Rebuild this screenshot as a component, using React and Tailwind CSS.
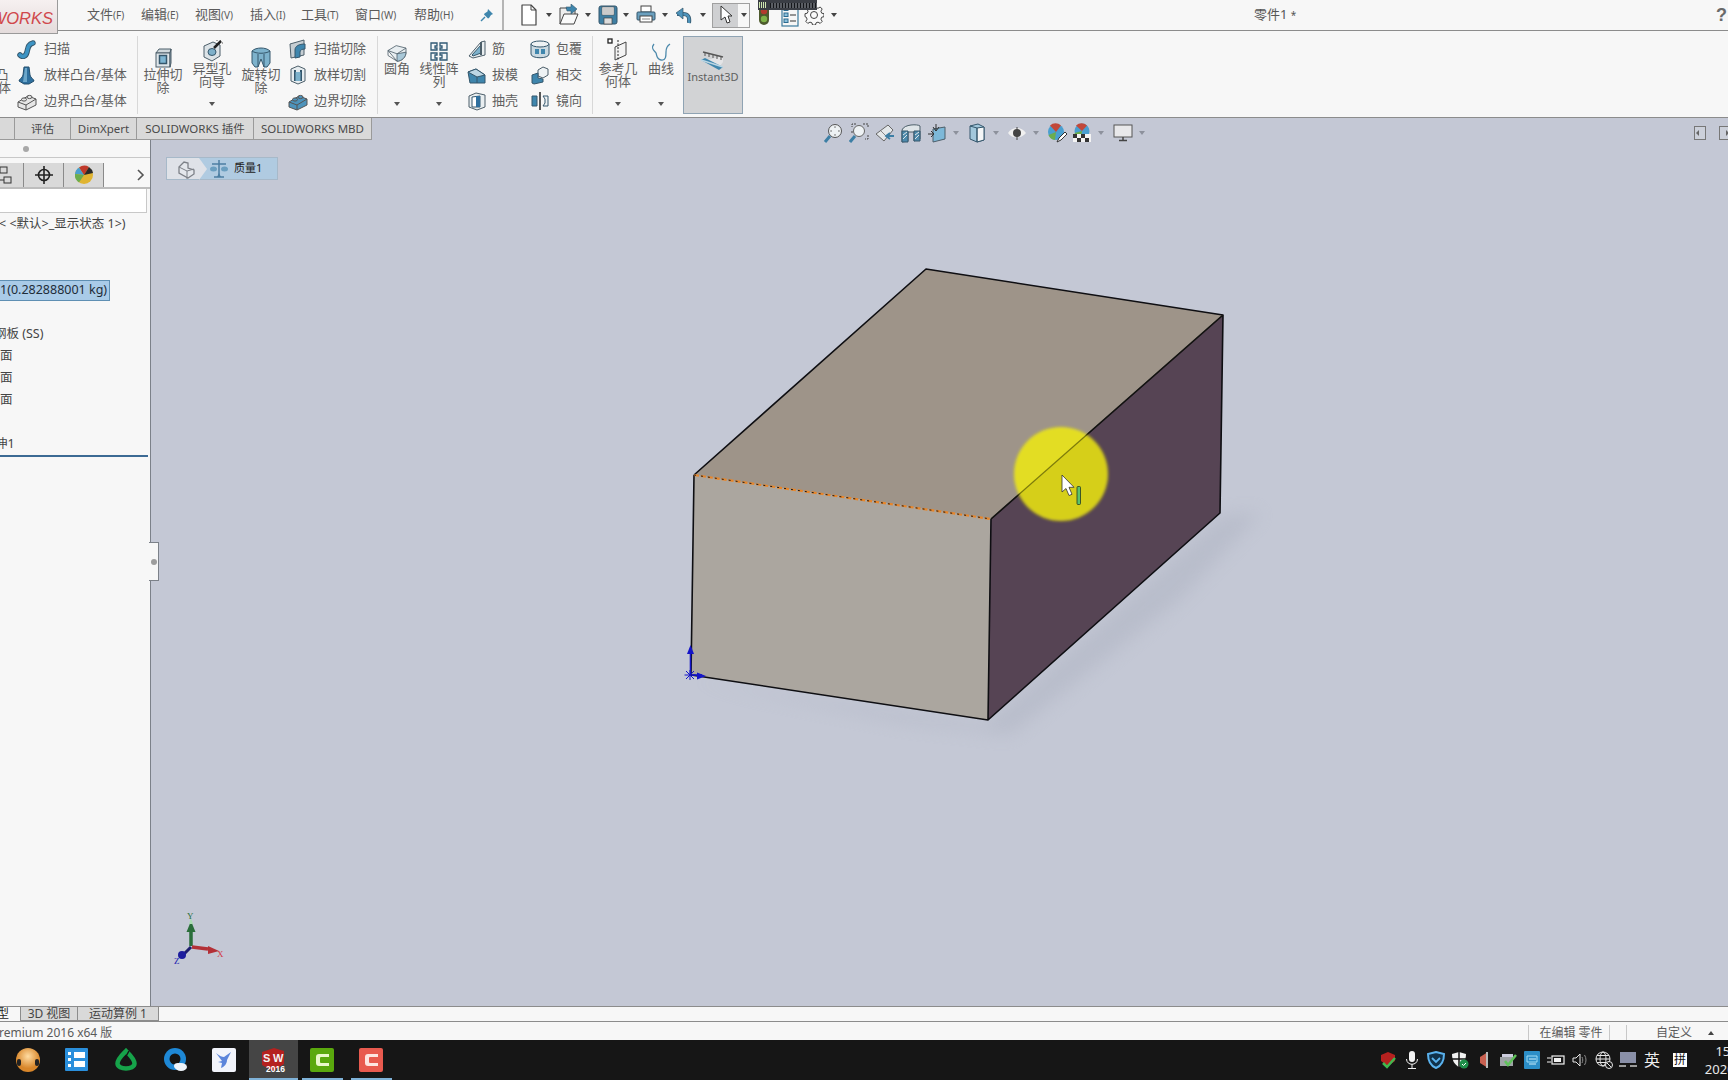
import React from "react";

const S = ({ w = 22, h = 22, vb, children, className = "" }) => (
  <svg width={w} height={h} viewBox={vb || `0 0 ${w} ${h}`} className={`block shrink-0 ${className}`} fill="none">
    {children}
  </svg>
);
const D = "#35576c";

const Arrow = ({ c = "#444" }) => (
  <svg width="8" height="4" viewBox="0 0 8 4" className="block shrink-0"><path d="M1 0h6L4 4z" fill={c} /></svg>
);

/* ---------- ribbon icons ---------- */
const I = {
  sweep: () => (<S w={20} h={20}><path d="M3 16c3 3 6 1 7-3s1-8 6-9" stroke={D} strokeWidth="5.5" strokeLinecap="round" /><path d="M3 16c3 3 6 1 7-3s1-8 6-9" stroke="#3d94c4" strokeWidth="3.6" strokeLinecap="round" /></S>),
  loft: () => (<S w={20} h={20}><path d="M7 2h5l1 8c.5 3 4 4 4 6l-5 3H7l-5-3c0-2 3.500-3 4-6z" fill="#2e6f9e" stroke="#234e6c" /><path d="M8 3h2l0 14H6z" fill="#6ba6c9" /></S>),
  lego: ({ f = "#e8e8e8" }) => (<S w={20} h={20}><path d="M1 11l10-6 8 3v6L9 19l-8-3z" fill={f} stroke="#555" /><path d="M1 11l8 3 10-6M9 14v5" stroke="#555" /><ellipse cx="7" cy="8.500" rx="2.500" ry="1.600" fill={f} stroke="#555" /><ellipse cx="12.500" cy="6" rx="2.500" ry="1.600" fill={f} stroke="#555" /></S>),
  extrudeCut: () => (<S><path d="M4 7l3-4h12l-1 4z" fill="#cfd8dc" stroke="#4d5f6a" /><rect x="4" y="7" width="14" height="14" fill="#dfe6ea" stroke="#4d5f6a" /><rect x="7.500" y="9.500" width="7" height="8" fill="#7eb5d2" stroke={D} strokeWidth="1.500" /><path d="M18 7l1-4v14l-1 4z" fill="#9eb2bf" stroke="#4d5f6a" /></S>),
  hole: () => (<S><path d="M3 6l9-4 7 3v11l-8 5-8-4z" fill="#dce3e7" stroke="#4d5f6a" /><ellipse cx="11" cy="12" rx="4" ry="3.500" fill="#7eb0ca" stroke={D} /><path d="M13 8l7-7" stroke="#222" strokeWidth="2.500" /><path d="M19 0l1 1M21 3l1 0M16 0v1" stroke="#555" /></S>),
  revolveCut: () => (<S><path d="M2 5c4-4 14-4 18 0v12l-3 4h-3l-3-8-3 8H5l-3-4z" fill="#7db2cc" stroke={D} /><path d="M2 5c4 3 14 3 18 0M8 8v13M14 8v13" stroke={D} /></S>),
  sweepCut: () => (<S w={20} h={20}><path d="M2 5l14-4v15l-13 3z" fill="#c6ced3" stroke="#4d5f6a" /><path d="M7 19V11c0-4 4-6 10-6v5c-3 0-5 1-5 3v5z" fill="#3f86ad" stroke={D} /></S>),
  loftCut: () => (<S w={20} h={20}><path d="M3 4l7-3 7 3v12l-7 3-7-3z" fill="#e6ecef" stroke="#4d5f6a" /><path d="M7 5v11M13 5v11" stroke={D} strokeWidth="2" /><path d="M7 16h3V7h-3zM13 16h-3V7h3z" fill="#7db2cc" /><path d="M7 16V6M13 16V6" stroke={D} /></S>),
  fillet: () => (<S w={20} h={18} vb="0 0 24 22"><path d="M1 8l10-6 12 3v5c0 6-5 11-11 11z" fill="#e8eef1" stroke="#4d5f6a" /><path d="M1 8l11 4 11-7" stroke="#4d5f6a" /><path d="M12 12v9c6 0 11-5 11-11z" fill="#a9c8d8" stroke="#4d5f6a" /><path d="M1 8v6l11 7" stroke="#4d5f6a" /></S>),
  pattern: () => (<S><g stroke="#315a75" strokeWidth="1.300" fill="#f4f7f8"><path d="M3 3h6v3H7v2h2v2H3z" /><path d="M12 3h7v7h-7V8h2V6h-2z" /><path d="M3 13h6v2H7v3h2v2H3z" /><path d="M12 13h7v7h-7v-2h2v-3h-2z" /></g></S>),
  rib: () => (<S w={20} h={20}><path d="M2 17l12-14 4-1v14L6 19z" fill="#e9eef0" stroke="#4d5f6a" /><path d="M5 16L14 6v8l-8 3z" fill="#7db2cc" stroke={D} /><path d="M14 3v13" stroke="#4d5f6a" strokeWidth="2" /></S>),
  draft: () => (<S w={20} h={20} ><path d="M1 7l8-3 9 6v8H3z" fill="#3f86ad" stroke={D} /><path d="M1 7l8-3 9 6-8 2z" fill="#bcd6e4" stroke={D} /><path d="M10 12v6" stroke={D} /></S>),
  shell: () => (<S w={20} h={20}><path d="M2 5l7-3 9 2v12l-8 3-8-3z" fill="#e9eef0" stroke="#4d5f6a" /><path d="M5 6l8-1v11l-8 0z" fill="#fff" stroke={D} /><path d="M9 5l4 0v11H9z" fill="#2f6f9e" /></S>),
  wrap: () => (<S w={20} h={20}><path d="M1 5v10c0 5 18 5 18 0V5" fill="#cad9e1" stroke={D} /><ellipse cx="10" cy="5" rx="9" ry="3" fill="#eef2f4" stroke={D} /><rect x="5" y="10" width="4" height="5" fill="#3f86ad" /><rect x="11" y="10" width="4" height="5" fill="#3f86ad" /></S>),
  intersect: () => (<S w={20} h={20}><path d="M8 5l5-3 5 2v6l-5 3-5-2z" fill="#eef2f4" stroke="#4d5f6a" /><path d="M2 10l6-2v5l5 1v3l-9 2-2-1z" fill="#3f86ad" stroke={D} /></S>),
  mirror: () => (<S w={20} h={20}><path d="M2 5h5v10H2zM4 8" fill="#3f86ad" stroke={D} /><path d="M13 5h5v10h-5l2-3v-4z" fill="#eef2f4" stroke={D} /><path d="M10 1v18" stroke="#222" strokeWidth="1.500" /></S>),
  refGeom: () => (<S w={22} h={24}><rect x="1" y="1" width="4" height="4" fill="#fff" stroke="#222" strokeWidth="1.300" /><path d="M8 9l11-5v13L8 22z" fill="#f3f3f3" stroke="#444" /><path d="M11 2v21" stroke="#222" strokeDasharray="2 1.500" /></S>),
  curve: () => (<S w={22} h={20}><path d="M4 2C0 7 5 9 6 11s0 6 5 7 5-4 5-8 1-6 4-8" stroke="#4d8aac" strokeWidth="1.300" /></S>),
  instant: () => (<S w={26} h={22}><path d="M3 12l20-5 0 6-5 7z" fill="#fff" opacity=".4" /><path d="M3 3l20 5" stroke="#555" strokeWidth="1.300" /><path d="M5 4v3M9 5v3M13 6v3M17 7v3M21 8v3" stroke="#555" /><path d="M1 11l4-2 18 9-4 3z" fill="#3f86ad" /><path d="M1 11l22 7" stroke="#bcd6e4" strokeWidth="1.500" /></S>),
  /* top bar */
  doc: () => (<S w={18} h={22}><path d="M2 1h9l5 5v15H2z" fill="#fff" stroke="#444" strokeWidth="1.200" strokeLinejoin="round" /><path d="M11 1v5h5" stroke="#444" /></S>),
  open: () => (<S w={22} h={22}><path d="M2 20V4h6l2 2h7v4" fill="#eee" stroke="#444" /><path d="M2 20l4-10h14l-4 10z" fill="#fafafa" stroke="#444" /><path d="M8 3h5V0l6 5-6 5V7H9z" fill="#3f86ad" stroke={D} strokeWidth=".6" /></S>),
  save: () => (<S w={20} h={20}><rect x="1" y="1" width="18" height="18" rx="2" fill="#3f7fa3" stroke={D} /><rect x="4" y="2" width="12" height="8" fill="#f0f0f0" stroke="#555" strokeWidth=".6" /><path d="M5 4h10M5 6h10M5 8h10" stroke="#888" strokeWidth=".7" /><rect x="6" y="13" width="8" height="6" fill="#dcdcdc" stroke="#444" strokeWidth=".7" /></S>),
  print: () => (<S w={20} h={20}><rect x="5" y="1" width="10" height="6" fill="#fff" stroke="#444" /><rect x="1" y="7" width="18" height="8" rx="1" fill="#6ba0bf" stroke={D} /><rect x="4" y="11" width="12" height="6" fill="#fff" stroke="#444" /><path d="M6 14h8" stroke="#888" /></S>),
  undo: () => (<S w={20} h={20}><path d="M3 9l6 0c5 0 7 3 6 9" stroke={D} strokeWidth="4" /><path d="M3 9l6 0c5 0 7 3 6 9" stroke="#4d93bb" strokeWidth="2.400" /><path d="M9 3L2 8l7 6z" fill="#4d93bb" stroke={D} strokeWidth=".7" /></S>),
  cursor: () => (<S w={14} h={20}><path d="M2 1v14l4-3 2 6 3-1-2-6h4z" fill="#fff" stroke="#333" strokeWidth="1" strokeLinejoin="round" /></S>),
  traffic: () => (<S w={12} h={22}><rect x="1" y="1" width="10" height="20" rx="5" fill="#4d5a2d" /><circle cx="6" cy="7" r="3.200" fill="#b33a2d" /><circle cx="6" cy="15" r="3.200" fill="#7eb247" /></S>),
  list: () => (<S w={18} h={24}><rect x="1" y="1" width="16" height="22" fill="#f6f6f6" stroke="#3b7a9d" strokeWidth="1.200" /><rect x="3" y="4" width="4" height="3.500" fill="none" stroke="#2a6a90" /><rect x="3" y="10" width="4" height="3.500" fill="#8cc0dc" stroke="#2a6a90" /><rect x="3" y="16" width="4" height="3.500" fill="#8cc0dc" stroke="#2a6a90" /><path d="M9 12h6M9 18h6" stroke="#333" /></S>),
  gear: () => (<S w={20} h={20}><path d="M8.500 1h3l.5 2.500 2 .8L16.200 3l2 2-1.300 2.200.8 2 2.300.5v3l-2.300.5-.8 2 1.300 2.200-2 2-2.200-1.300-2 .8-.5 2.100h-3l-.5-2.100-2-.8-2.200 1.300-2-2 1.300-2.200-.8-2L1 12.700v-3l2.300-.5.8-2L2.800 5l2-2 2.200 1.300 1-.8z" transform="translate(0 -1)" stroke="#444" fill="#fafafa" /><circle cx="10" cy="10" r="3.500" stroke="#444" /></S>),
  pin: () => (<S w={14} h={14}><path d="M8 1l5 5-2 1-2 3-1 .500L4 6.500l.500-1 3-2z" fill="#3f86ad" /><path d="M5 9l-4 4" stroke="#3f86ad" strokeWidth="1.500" /></S>),
  /* view toolbar */
  zoomFit: () => (<S w={20} h={20}><circle cx="12" cy="8" r="6.500" fill="#eef2f4" stroke="#555" /><path d="M2 19l5-6" stroke="#3d7fa5" strokeWidth="3" /><path d="M12 3l1 1.500h-2zM12 13l1-1.500h-2zM7 8l1.500-1v2zM17 8l-1.500-1v2z" fill="#555" /></S>),
  zoomArea: () => (<S w={20} h={20}><path d="M7 1H3v3M14 1h5v4M19 12v4h-3M3 8v2" stroke="#444" strokeDasharray="2 1" /><circle cx="10" cy="8" r="5.500" fill="#eef2f4" stroke="#666" /><path d="M1 19l5-6" stroke="#3d7fa5" strokeWidth="3" /></S>),
  prev: () => (<S w={20} h={20}><path d="M1 11l12-9 5 5-9 11z" fill="#e4e8ea" stroke="#666" /><path d="M6 8l5 5" stroke="#888" /><path d="M19 13h-7m3-3l-4 3 4 3" stroke="#3d7fa5" strokeWidth="1.800" /></S>),
  section: () => (<S w={20} h={20}><path d="M1 7c2-6 16-6 18-4v13l-6 2V9H7v9l-6 1z" fill="#dfe5e8" stroke="#4d5f6a" /><path d="M1 8h6v11H1zM13 8h6v10h-6z" fill="#4d8aac" stroke={D} /><path d="M2 12l4-3M2 16l4-4M14 12l4-3M14 16l4-4" stroke="#dfe5e8" /></S>),
  orient: () => (<S w={20} h={20}><path d="M6 6l12-2v12L6 19z" fill="#7db8d8" stroke="#4d5f6a" /><path d="M9 1v7M6 4l3 4 3-4" stroke="#333" /><path d="M1 11h6M4 8l3 3-3 3" stroke="#333" /></S>),
  cube: () => (<S w={18} h={20}><path d="M2 3l8-2 6 3v13l-7 2-7-3z" fill="#a2c8dc" stroke={D} /><path d="M9 5l7-1v13l-7 2z" fill="#f4f6f7" stroke={D} /><path d="M2 3l7 2v14" stroke={D} /></S>),
  eye: () => (<S w={18} h={14}><path d="M0 7c4-6 13-7 18 0-5 6-14 6-18 0z" fill="#f0f0f0" /><circle cx="9" cy="7" r="4" fill="#444" /><path d="M9 1v13" stroke="#444" /></S>),
  ballPen: () => (<S w={20} h={20}><circle cx="9" cy="9" r="8" fill="#4a9fd0" /><path d="M9 9L3 2.500A8 8 0 0 1 14 2.500z" fill="#c2483a" /><path d="M9 9L1.500 12A8 8 0 0 0 8 17z" fill="#6bad4e" /><path d="M10 19l2-4 6-6 2 2-6 6z" fill="#fff" stroke="#333" /></S>),
  ballScene: () => (<S w={20} h={20}><circle cx="10" cy="8" r="7.500" fill="#4a9fd0" /><path d="M10 8L4 2.500A8 8 0 0 1 15 2.500z" fill="#c2483a" /><path d="M10 8L2.500 10A8 8 0 0 0 9 15z" fill="#6bad4e" /><rect x="1" y="11" width="18" height="8" fill="#f4f4f4" /><path d="M1 11h4v4H1zM9 11h4v4H9zM5 15h4v4H5zM13 15h4v4h-4z" fill="#333" /></S>),
  monitor: () => (<S w={20} h={18}><rect x="1" y="1" width="18" height="12" fill="#e8e8ea" stroke="#555" /><path d="M10 13v3M6 16.500h8" stroke="#444" strokeWidth="1.500" /></S>),
  panelL: () => (<S w={12} h={14}><rect x=".5" y=".5" width="11" height="13" stroke="#777" fill="#ccd0da" /><path d="M5 4v6L2 7z" fill="#666" /></S>),
  panelR: () => (<S w={12} h={14}><rect x=".5" y=".5" width="11" height="13" stroke="#777" fill="#ccd0da" /><path d="M7 4v6l3-3z" fill="#666" /></S>),
  /* misc */
  tree: () => (<S w={16} h={18}><rect x="4" y="1" width="7" height="6" fill="none" stroke="#333" /><rect x="8" y="11" width="7" height="6" fill="none" stroke="#333" /><path d="M1 4h3M1 4v10h7" stroke="#333" /></S>),
  target: () => (<S w={18} h={18}><circle cx="9" cy="9" r="5.500" stroke="#222" strokeWidth="1.600" /><path d="M9 0v18M0 9h18" stroke="#222" strokeWidth="1.600" /></S>),
  ball: () => (<S w={20} h={20}><circle cx="10" cy="10" r="9" fill="#e0b431" /><path d="M10 10L5 2.500A9 9 0 0 1 15 2z" fill="#c0392b" /><path d="M10 10l9-2A9 9 0 0 0 15 2z" fill="#2a2a2a" /><path d="M10 10L1 9a9 9 0 0 1 4-6.500z" fill="#4a9fd0" /><path d="M10 10L1 9a9 9 0 0 0 4 8.500z" fill="#6bad4e" /></S>),
  part: () => (<S w={20} h={20}><path d="M3 8l5-5 4 1v5l6 2v4l-6 4-9-5z" fill="#e4e7ec" stroke="#7d8188" strokeWidth="1.300" /><path d="M3 8l8 4v8M11 12l7-2" stroke="#7d8188" /></S>),
  scale: () => (<S w={20} h={20}><path d="M10 1v15M5 18h10M3 5h14" stroke="#4c7fa2" strokeWidth="1.500" /><ellipse cx="4.500" cy="10" rx="3.500" ry="2.500" fill="#6b9fc0" /><ellipse cx="15.500" cy="10" rx="3.500" ry="2.500" fill="#6b9fc0" /><path d="M8 18l2-4 2 4z" fill="#4c7fa2" /></S>),
};

/* ---------- taskbar & tray icons ---------- */
const T = {
  avatar: () => (<S w={24} h={24}><defs><radialGradient id="av" cx=".5" cy=".35"><stop offset="0" stopColor="#ffdca2" /><stop offset="1" stopColor="#d8862a" /></radialGradient></defs><circle cx="12" cy="12" r="12" fill="url(#av)" /><rect x="1" y="11" width="4" height="7" rx="2" fill="#222" /><rect x="19" y="11" width="4" height="7" rx="2" fill="#222" /></S>),
  files: () => (<S w={24} h={24}><rect width="23" height="23" rx="1" fill="#2a8fdc" /><rect x="9" y="4" width="11" height="6" fill="#fff" /><rect x="9" y="13" width="11" height="6" fill="#fff" /><rect x="3" y="4" width="3" height="3" fill="#fff" /><rect x="3" y="10" width="3" height="3" fill="#fff" /><rect x="3" y="16" width="3" height="3" fill="#fff" /></S>),
  ring: () => (<S w={24} h={24}><path d="M12 3C8 7 3.500 11 3.500 15.500 3.500 22 20.500 22 20.500 15.500 20.500 11 16 7 12 3z" stroke="#16a34a" strokeWidth="4.500" /><path d="M15 3l-4 7" stroke="#141414" strokeWidth="1.500" /></S>),
  edge: () => (<S w={24} h={24}><circle cx="12" cy="11" r="11" fill="#1e88d6" /><circle cx="12" cy="11" r="5.500" fill="#141414" /><ellipse cx="18" cy="19" rx="6" ry="4" fill="#eef4fa" /><ellipse cx="15" cy="18" rx="4" ry="3" fill="#eef4fa" /></S>),
  bird: () => (<S w={24} h={24}><rect width="24" height="24" rx="2" fill="#f2f4fb" /><path d="M4 5c4 3 6 4 8 4l7-5-4 8c0 4-3 7-6 8l1-5-4-1 4-1z" fill="#5c85db" /></S>),
  sw: () => (<S w={26} h={26}><path d="M2 5l12-4 10 3v13l-11 7-11-6z" fill="#b5211f" /><text x="3" y="15" fontSize="11" fontWeight="700" fill="#f3f3f3" fontFamily="Liberation Sans, sans-serif">S</text><text x="13" y="15" fontSize="11" fontWeight="700" fill="#f3f3f3" fontFamily="Liberation Sans, sans-serif">W</text><text x="6" y="25" fontSize="8.500" fontWeight="700" fill="#fff" fontFamily="Liberation Sans, sans-serif">2016</text></S>),
  cGreen: () => (<S w={24} h={24}><rect width="24" height="24" rx="2" fill="#5aa80d" /><path d="M19 6H9c-2 0-3 1-3 3v6c0 2 1 3 3 3h10v-3h-8c-1 0-1-1-1-1v-4s0-1 1-1h8z" fill="#e8f7c9" /></S>),
  cRed: () => (<S w={24} h={24}><rect width="24" height="24" rx="2" fill="#e85a4f" /><path d="M19 6H9c-2 0-3 1-3 3v6c0 2 1 3 3 3h10v-3h-8c-1 0-1-1-1-1v-4s0-1 1-1h8z" fill="#fde5e1" /></S>),
  trSw: () => (<S w={18} h={18}><path d="M2 4l7-3 7 3v6l-7 5-7-5z" fill="#b5211f" /><path d="M4 12l4 4 8-9" stroke="#3fb950" strokeWidth="2.500" /></S>),
  mic: () => (<S w={14} h={18}><rect x="4" y="0" width="6" height="11" rx="3" fill="#f2f2f2" /><path d="M1.500 8c0 7 11 7 11 0M7 13v4M3 17.500h8" stroke="#f2f2f2" /></S>),
  shield: () => (<S w={18} h={18}><path d="M9 1l8 2c0 8-3 12-8 14C4 15 1 11 1 3z" stroke="#5ab2ee" strokeWidth="2" fill="#10314a" /><path d="M5 7l4 4 4-4" stroke="#5ab2ee" strokeWidth="1.800" /></S>),
  shield2: () => (<S w={18} h={18}><path d="M8 1l7 2c0 7-3 11-7 13C4 14 1 10 1 3z" fill="#f2f2f2" /><path d="M8 1v15M1 8h14" stroke="#141414" strokeWidth="1.500" /><circle cx="13" cy="13" r="4.500" fill="#1f8f4a" /><path d="M11 13l1.500 1.500L15 12" stroke="#fff" /></S>),
  speakerRed: () => (<S w={12} h={18}><path d="M2 6l8-5v16L2 12z" fill="#c96050" /><rect x="8" y="1" width="2" height="16" fill="#bbb" /></S>),
  greenCheck: () => (<S w={18} h={16}><path d="M1 5h13v9H1z" fill="#9ea3a6" /><path d="M3 2h11v3H3z" fill="#ccd" /><path d="M6 9l3 4 8-10" stroke="#5fc25a" strokeWidth="2.500" /></S>),
  blueBox: () => (<S w={16} h={18}><rect width="16" height="18" rx="1" fill="#2c8ec7" /><path d="M3 5h10v6H3z" stroke="#9fdcf5" /><path d="M5 8h7M5 13h7" stroke="#cfeefa" /></S>),
  power: () => (<S w={18} h={12}><rect x="5" y="2" width="12" height="8" stroke="#f2f2f2" strokeWidth="1.200" /><rect x="7" y="4" width="7" height="4" fill="#f2f2f2" /><path d="M0 4h4M0 8h4" stroke="#f2f2f2" strokeWidth="1.200" /></S>),
  vol: () => (<S w={16} h={14}><path d="M1 5h3l4-4v12L4 9H1z" stroke="#e8e8e8" /><path d="M10 4c1 2 1 4 0 6M12.500 2c2 3 2 7 0 10" stroke="#8a8a8a" /></S>),
  globe: () => (<S w={18} h={18}><circle cx="8" cy="8" r="7" stroke="#e8e8e8" /><ellipse cx="8" cy="8" rx="3" ry="7" stroke="#e8e8e8" /><path d="M1 8h14M2 4.500h12M2 11.500h12" stroke="#e8e8e8" /><circle cx="14" cy="14" r="3.500" fill="#141414" stroke="#e8e8e8" /><path d="M12 12l4 4" stroke="#e8e8e8" /></S>),
  laptop: () => (<S w={18} h={16}><rect x="1" y="0" width="16" height="11" fill="#8a90a8" /><rect x="0" y="13" width="7" height="2" fill="#9a9a9a" /><rect x="11" y="13" width="7" height="2" fill="#9a9a9a" /></S>),
};

const tc = "text-[#5f5f5f]";

const Big = ({ icon, lines, low, drop, w }) => (
  <div className={`flex flex-col items-center shrink-0 h-[78px] ${w}`}>
    <div className={`flex items-end justify-center w-full shrink-0 ${low ? "h-[32px]" : "h-[26px]"}`}>{icon}</div>
    <div className={`text-center leading-[13px] whitespace-nowrap ${tc}`}>
      {lines.map((l) => (<div key={l}>{l}</div>))}
    </div>
    {drop && <div className="mt-auto mb-[8px]"><Arrow c="#555" /></div>}
  </div>
);

const Col = ({ items, w, pl, gap }) => (
  <div className={`flex flex-col shrink-0 ${w} ${pl}`}>
    {items.map(([icon, label]) => (
      <div key={label} className={`flex items-center h-[26px] whitespace-nowrap ${gap} ${tc}`}>
        <div className="w-[20px] flex justify-center shrink-0">{icon}</div>
        <span>{label}</span>
      </div>
    ))}
  </div>
);

const Divider = () => <div className="w-px h-[78px] bg-[#d8d8d8] shrink-0" />;

const Menu = ({ t, k, w }) => (
  <div className={`shrink-0 text-[13px] text-[#5a5a5a] whitespace-nowrap ${w}`}>
    {t}<span className="text-[10px]">{k}</span>
  </div>
);

function TopBar() {
  return (
    <div className="relative flex items-start h-[31px] shrink-0 bg-[#f7f7f7] border-b border-[#8c8c8c] z-20">
      <div className="relative w-[58px] h-[34px] shrink-0 bg-gradient-to-b from-[#f6f0f0] to-[#e4dcdc] border-r border-b border-[#9a9a9a] overflow-hidden flex items-center justify-end pr-[4px] pt-[4px]">
        <span className="italic text-[#d0484c] text-[16.5px] font-['Liberation_Sans',sans-serif]">WORKS</span>
      </div>
      <div className="flex items-center h-[30px] ml-[29px]">
        <Menu t="文件" k="(F)" w="w-[54px]" />
        <Menu t="编辑" k="(E)" w="w-[54px]" />
        <Menu t="视图" k="(V)" w="w-[55px]" />
        <Menu t="插入" k="(I)" w="w-[51px]" />
        <Menu t="工具" k="(T)" w="w-[54px]" />
        <Menu t="窗口" k="(W)" w="w-[59px]" />
        <Menu t="帮助" k="(H)" w="w-[61px]" />
        <div className="w-[24px] flex justify-center"><I.pin /></div>
        <div className="w-[2px] h-[30px] ml-[3px] bg-[#b5b5b5]" />
        <div className="w-[22px] ml-[14px] flex justify-center"><I.doc /></div>
        <div className="ml-[5px]"><Arrow /></div>
        <div className="w-[22px] ml-[5px] flex justify-center"><I.open /></div>
        <div className="ml-[4px]"><Arrow /></div>
        <div className="w-[22px] ml-[5px] flex justify-center"><I.save /></div>
        <div className="ml-[3px]"><Arrow /></div>
        <div className="w-[22px] ml-[5px] flex justify-center"><I.print /></div>
        <div className="ml-[4px]"><Arrow /></div>
        <div className="w-[22px] ml-[4px] flex justify-center"><I.undo /></div>
        <div className="ml-[4px]"><Arrow /></div>
        <div className="flex items-center ml-[5px] h-[25px] w-[38px] border border-[#a0a0a0] bg-[#f7f7f7]">
          <div className="w-[25px] h-full bg-[#cfd0d2] flex items-center justify-center"><I.cursor /></div>
          <div className="flex-1 flex justify-center"><Arrow /></div>
        </div>
        <div className="w-[18px] ml-[5px] flex justify-center"><I.traffic /></div>
        <div className="w-[22px] ml-[6px] flex justify-center"><I.list /></div>
        <div className="w-[22px] ml-[2px] flex justify-center"><I.gear /></div>
        <div className="ml-[5px]"><Arrow /></div>
        <div className="ml-[416px] text-[13px] text-[#555] whitespace-nowrap">零件1 <span className="text-[10px]">*</span></div>
      </div>
      <div className="absolute left-[758px] top-0 w-[59px] h-[10px] bg-[#3a3d44] flex items-center pl-[1px] gap-[1px] overflow-hidden">
        <span className="w-[1px] h-[6px] bg-[#cfe6b0]" /><span className="w-[1px] h-[6px] bg-[#cfe6b0]" /><span className="w-[1px] h-[6px] bg-[#cfe6b0]" /><span className="w-[1px] h-[6px] bg-[#cfe6b0]" />
        <span className="flex-1 h-[5px] ml-[3px] bg-[repeating-linear-gradient(90deg,#15171b_0,#15171b_1px,#5a5d63_1px,#5a5d63_3px)]" />
      </div>
      <div className="absolute right-[1px] top-[4px] text-[18px] leading-[22px] font-bold text-[#6a6a6a] font-['Liberation_Sans',sans-serif]">?</div>
    </div>
  );
}

function Ribbon() {
  return (
    <div className="flex items-start h-[87px] shrink-0 bg-[#f7f7f7] border-b border-[#8c8c8c] pt-[5px] text-[13px] overflow-hidden">
      <div className="ml-[-33px]"><Big w="w-[44px]" low icon={<span className="w-[22px] h-[22px]" />} lines={["拉伸凸", "台/基体"]} /></div>
      <Col w="w-[126px]" pl="pl-[6px]" gap="gap-[7px]" items={[[<I.sweep />, "扫描"], [<I.loft />, "放样凸台/基体"], [<I.lego f="#e6e6e6" />, "边界凸台/基体"]]} />
      <Divider />
      <div className="w-[1px]" />
      <Big w="w-[48px]" low icon={<I.extrudeCut />} lines={["拉伸切", "除"]} />
      <Big w="w-[50px]" drop icon={<I.hole />} lines={["异型孔", "向导"]} />
      <Big w="w-[48px]" low icon={<I.revolveCut />} lines={["旋转切", "除"]} />
      <Col w="w-[92px]" pl="pl-[3px]" gap="gap-[6px]" items={[[<I.sweepCut />, "扫描切除"], [<I.loftCut />, "放样切割"], [<I.lego f="#4d93bb" />, "边界切除"]]} />
      <Divider />
      <Big w="w-[38px]" drop icon={<I.fillet />} lines={["圆角"]} />
      <Big w="w-[46px]" drop icon={<I.pattern />} lines={["线性阵", "列"]} />
      <Col w="w-[68px]" pl="pl-[5px]" gap="gap-[5px]" items={[[<I.rib />, "筋"], [<I.draft />, "拔模"], [<I.shell />, "抽壳"]]} />
      <Col w="w-[62px]" pl="pl-0" gap="gap-[6px]" items={[[<I.wrap />, "包覆"], [<I.intersect />, "相交"], [<I.mirror />, "镜向"]]} />
      <Divider />
      <Big w="w-[50px]" drop icon={<I.refGeom />} lines={["参考几", "何体"]} />
      <Big w="w-[36px]" drop icon={<I.curve />} lines={["曲线"]} />
      <div className="ml-[4px] w-[60px] h-[78px] shrink-0 flex flex-col items-center bg-[#d2d3d5] border border-[#8fa3b3] pt-[12px]">
        <I.instant />
        <span className={`text-[11px] leading-[16px] mt-[-2px] ${tc}`}>Instant3D</span>
      </div>
    </div>
  );
}

const Tab = ({ t, w }) => (
  <div className={`h-[22px] flex items-center justify-center shrink-0 bg-[#d9d9d9] border-r border-b border-[#9a9a9a] text-[11.5px] text-[#4a4a4a] whitespace-nowrap ${w}`}>{t}</div>
);

function Sidebar() {
  const rows = ["top", "e1", "e2", "sel", "e3", "mat", "p1", "p2", "p3", "e4", "ext"];
  return (
    <div className="relative z-10 w-[151px] shrink-0 h-full bg-[#f7f7f7] border-r border-[#7c8189] text-[12.5px] text-[#444]">
      <div className="h-[23px]" />
      <div className="h-[17px] border-b border-[#c8c8c8] flex items-center pl-[23px]">
        <div className="w-[6px] h-[6px] rounded-full bg-[#a8a8a8]" />
      </div>
      <div className="h-[26px] mt-[5px] flex items-stretch border-b-2 border-[#bdbdbd]">
        <div className="w-[24px] bg-[#d9d9d9] border-r border-[#8a8a8a] flex items-center justify-start overflow-hidden"><div className="ml-[-4px]"><I.tree /></div></div>
        <div className="w-[40px] bg-[#d9d9d9] border-r border-[#8a8a8a] flex items-center justify-center"><I.target /></div>
        <div className="w-[40px] bg-[#d9d9d9] border-r border-[#8a8a8a] flex items-center justify-center"><I.ball /></div>
        <div className="flex-1 flex items-center justify-end pr-[5px]">
          <svg width="8" height="12" viewBox="0 0 8 12"><path d="M1 1l5 5-5 5" stroke="#555" strokeWidth="1.600" fill="none" /></svg>
        </div>
      </div>
      <div className="h-[24px] w-[147px] bg-white border-r border-b border-[#c8c8c8]" />
      {rows.map((r) => (
        <div key={r} className="h-[22px] flex items-center whitespace-nowrap">
          {r === "top" && <span className="ml-[-1px]">&lt; &lt;默认&gt;_显示状态 1&gt;)</span>}
          {r === "sel" && <span className="h-[21px] w-[110px] flex items-center bg-[#a9cbe8] border border-[#5f8fb3] border-l-0 text-[#1f2d3a]">1(0.282888001 kg)</span>}
          {r === "mat" && <span className="ml-[-6px]">钢板 (SS)</span>}
          {(r === "p1" || r === "p2" || r === "p3") && <span>面</span>}
          {r === "ext" && <span className="ml-[-5px]">伸1</span>}
        </div>
      ))}
      <div className="h-[2px] w-[148px] bg-[#3c6a94]" />
      <div className="absolute left-[149px] top-[424px] w-[10px] h-[39px] bg-[#f7f7f7] border-y border-r border-[#7c8189] flex items-center justify-center">
        <div className="w-[6px] h-[6px] rounded-full bg-[#9d9d9d]" />
      </div>
    </div>
  );
}

function Model() {
  return (
    <svg viewBox="151 118 1577 888" className="absolute inset-0 w-full h-full" fill="none">
      <defs>
        <filter id="soft" x="-30%" y="-30%" width="160%" height="160%"><feGaussianBlur stdDeviation="9" /></filter>
        <filter id="edge" x="-20%" y="-20%" width="140%" height="140%"><feGaussianBlur stdDeviation="1.500" /></filter>
      </defs>
      <path d="M690 680L985 724L1222 515L1262 512L1180 600L1010 735L900 722z" fill="#abb0bf" opacity=".45" filter="url(#soft)" />
      <polygon points="926,269 1223,315 991,519 694,475" fill="#9e9489" />
      <polygon points="694,475 991,519 988,720 691,675" fill="#aba69f" />
      <polygon points="991,519 1223,315 1220,513 988,720" fill="#564454" />
      <path d="M694 475L926 269L1223 315L1220 513L988 720L691 675L694 475M991 519L1223 315M991 519L988 720" stroke="#0e0e12" strokeWidth="1.600" strokeLinejoin="round" />
      <path d="M694 475L991 519" stroke="#e8862a" strokeWidth="2.200" strokeDasharray="5 2" />
      <path d="M694 475L991 519" stroke="#1a1a1a" strokeWidth="1" strokeDasharray="2 5" />
      <circle cx="1061" cy="474" r="47" fill="#f3ee0c" opacity=".82" filter="url(#edge)" />
      <path d="M991 519L1223 315" stroke="#1a1a10" strokeWidth="1.200" opacity=".45" />
      <path d="M1062 475v17l4-3.500 3 7 3-1.200-3-7h5z" fill="#fff" stroke="#333" strokeWidth=".8" />
      <rect x="1077" y="486.500" width="3.500" height="18" rx="1" fill="#5cc26a" stroke="#24391f" strokeWidth=".8" />
      {/* origin */}
      <path d="M690.500 675V650" stroke="#1414c8" strokeWidth="1.600" />
      <path d="M690.500 645l-3.500 9h7z" fill="#1414c8" />
      <path d="M692 675h10" stroke="#1414c8" strokeWidth="1.600" />
      <path d="M706 676l-9-3.500v7z" fill="#1414c8" />
      <path d="M686 671l8 8M694 671l-8 8M684.500 675h11M690 670v10" stroke="#1414c8" strokeWidth="1" />
      {/* triad */}
      <path d="M191 946V927" stroke="#2a6e3a" strokeWidth="3.500" />
      <path d="M191 921l-4.500 11h9z" fill="#2a6e3a" />
      <path d="M191 918l-2 6h4z" fill="#a9dcb2" />
      <path d="M192 947l16 2" stroke="#b33037" strokeWidth="3.500" />
      <path d="M219 951l-11-5v8z" fill="#b33037" />
      <path d="M191 947l-7 7" stroke="#1d1d6e" strokeWidth="3" />
      <circle cx="182" cy="955" r="4" fill="#1d1d9e" />
      <text x="187" y="919" fontSize="9" fill="#2a6e3a" fontFamily="Liberation Serif, serif">Y</text>
      <text x="217" y="957" fontSize="9" fill="#d33540" fontFamily="Liberation Serif, serif">X</text>
      <text x="174" y="964" fontSize="9" fill="#2020b0" fontFamily="Liberation Serif, serif">Z</text>
    </svg>
  );
}

function Viewport() {
  const V = ({ c, a, ml }) => (
    <>
      <div className={`w-[20px] flex justify-center shrink-0 ${ml}`}>{c}</div>
      {a && <div className="ml-[5px] shrink-0"><Arrow c="#8d919c" /></div>}
    </>
  );
  return (
    <div className="relative flex-1 h-full bg-[#c4c8d5] overflow-hidden">
      <Model />
      <div className="absolute left-[15px] top-[39px] w-[112px] h-[23px] flex items-center bg-[#b0cbe1] border border-[#a7b9c9]">
        <div className="relative w-[32px] h-full bg-[#dfe2e8] flex items-center justify-center shrink-0 pl-[6px]">
          <I.part />
          <div className="absolute right-[-8px] top-0 w-0 h-0 border-y-[11px] border-y-transparent border-l-[8px] border-l-[#dfe2e8]" />
        </div>
        <div className="ml-[10px]"><I.scale /></div>
        <span className="ml-[5px] text-[11px] text-[#222] whitespace-nowrap">质量1</span>
      </div>
      <div className="absolute left-[672px] top-[4px] h-[22px] flex items-center">
        <V c={<I.zoomFit />} />
        <V c={<I.zoomArea />} ml="ml-[6px]" />
        <V c={<I.prev />} ml="ml-[6px]" />
        <V c={<I.section />} ml="ml-[6px]" />
        <V c={<I.orient />} ml="ml-[6px]" a />
        <V c={<I.cube />} ml="ml-[7px]" a />
        <V c={<I.eye />} ml="ml-[7px]" a />
        <V c={<I.ballPen />} ml="ml-[7px]" />
        <V c={<I.ballScene />} ml="ml-[5px]" a />
        <V c={<I.monitor />} ml="ml-[8px]" a />
      </div>
      <div className="absolute left-[1543px] top-[8px] flex gap-[13px]"><I.panelL /><I.panelR /></div>
    </div>
  );
}

function BottomTabs() {
  return (
    <div className="flex items-start h-[15px] shrink-0 bg-[#f7f7f7] border-t border-[#8c8c8c] text-[12px] leading-[14px] text-[#444] overflow-hidden">
      <span className="w-[20px] ml-[-3px] shrink-0 pl-0 text-[#222]">型</span>
      <span className="w-[58px] ml-[3px] h-[14px] shrink-0 text-center bg-[#d9d9d9] border border-t-0 border-[#8c8c8c] whitespace-nowrap">3D 视图</span>
      <span className="w-[81px] h-[14px] shrink-0 text-center bg-[#d9d9d9] border border-t-0 border-l-0 border-[#8c8c8c] whitespace-nowrap">运动算例 1</span>
    </div>
  );
}

function StatusBar() {
  return (
    <div className="flex items-center h-[19px] shrink-0 bg-[#f7f7f7] border-t border-[#8c8c8c] text-[12px] text-[#5a5a5a] whitespace-nowrap overflow-hidden">
      <span className="ml-[-1px] pt-[4px]">remium 2016 x64 版</span>
      <div className="ml-auto flex h-full items-center pt-[3px]">
        <div className="w-[82px] h-full border-x border-[#c8c8c8] flex items-center justify-center pl-[4px]">在编辑 零件</div>
        <div className="w-[16px]" />
        <div className="w-[102px] h-full border-l border-[#c8c8c8] flex items-center">
          <span className="ml-[29px]">自定义</span>
          <span className="ml-[16px]"><svg width="6" height="4" viewBox="0 0 6 4" className="block"><path d="M3 0l3 4H0z" fill="#444" /></svg></span>
        </div>
      </div>
    </div>
  );
}

function Taskbar() {
  const apps = [
    [<T.avatar />], [<T.files />], [<T.ring />], [<T.edge />], [<T.bird />],
    [<T.sw />, "active"], [<T.cGreen />, "open"], [<T.cRed />, "open"],
  ];
  const tray = [<T.trSw />, <T.mic />, <T.shield />, <T.shield2 />, <T.speakerRed />, <T.greenCheck />, <T.blueBox />, <T.power />, <T.vol />, <T.globe />, <T.laptop />];
  return (
    <div className="flex items-stretch h-[40px] shrink-0 bg-[#161616] overflow-hidden pl-[3.500px]">
      {apps.map(([ic, st], i) => (
        <div key={i} className={`relative w-[49px] shrink-0 flex items-center justify-center ${st === "active" ? "bg-[#454545]" : ""}`}>
          {ic}
          {st === "active" && <div className="absolute bottom-0 inset-x-0 h-[2px] bg-[#7fb2d8]" />}
          {st === "open" && <div className="absolute bottom-0 inset-x-[4px] h-[2px] bg-[#7fb2d8]" />}
        </div>
      ))}
      <div className="flex items-center ml-[980.500px] shrink-0">
        {tray.map((ic, i) => (<div key={i} className="w-[24px] flex justify-center shrink-0">{ic}</div>))}
        <div className="w-[24px] text-center text-[16px] text-[#eee] shrink-0">英</div>
        <div className="w-[32px] flex justify-center shrink-0"><span className="w-[14px] h-[14px] bg-white text-[#111] text-[12px] leading-[14px] text-center">拼</span></div>
        <div className="w-[60px] ml-[6px] shrink-0 text-center text-[13px] leading-[18px] text-[#e8e8e8] whitespace-nowrap">
          <div>15:42</div>
          <div>2020/4/8</div>
        </div>
      </div>
    </div>
  );
}

export default function App() {
  return (
    <div className="w-[1728px] h-[1080px] overflow-hidden flex flex-col bg-[#f7f7f7] font-['Noto_Sans','Noto_Sans_CJK_SC',sans-serif]">
      <TopBar />
      <Ribbon />
      <div className="relative flex flex-1 min-h-0">
        <Sidebar />
        <Viewport />
        <div className="absolute left-0 top-0 flex z-20">
          <Tab t="" w="w-[15px]" />
          <Tab t="评估" w="w-[56px]" />
          <Tab t="DimXpert" w="w-[66px]" />
          <Tab t="SOLIDWORKS 插件" w="w-[117px]" />
          <Tab t="SOLIDWORKS MBD" w="w-[118px]" />
        </div>
      </div>
      <BottomTabs />
      <StatusBar />
      <Taskbar />
    </div>
  );
}
